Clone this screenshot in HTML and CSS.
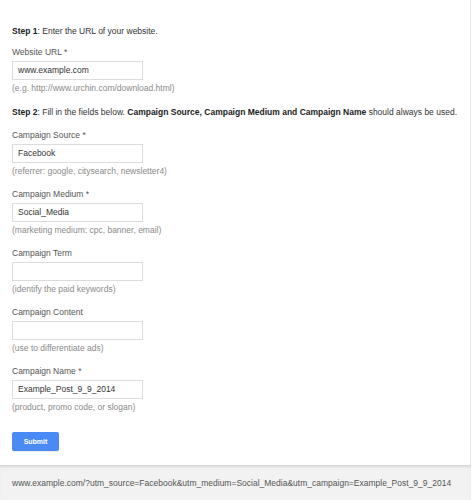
FILE: index.html
```html
<!DOCTYPE html>
<html>
<head>
<meta charset="utf-8">
<link rel="stylesheet" href="styles.css">
</head>
<body>
<div class="page">
  <form class="card">
    <p class="step"><b>Step 1</b>: Enter the URL of your website.</p>
    <div class="field first">
      <label class="label">Website URL *</label>
      <div class="input">www.example.com</div>
      <div class="hint">(e.g. http://www.urchin.com/download.html)</div>
    </div>
    <p class="step step2"><b>Step 2</b>: Fill in the fields below. <b>Campaign Source, Campaign Medium and Campaign Name</b> should always be used.</p>
    <div class="field">
      <label class="label">Campaign Source *</label>
      <div class="input">Facebook</div>
      <div class="hint">(referrer: google, citysearch, newsletter4)</div>
    </div>
    <div class="field">
      <label class="label">Campaign Medium *</label>
      <div class="input">Social_Media</div>
      <div class="hint">(marketing medium: cpc, banner, email)</div>
    </div>
    <div class="field">
      <label class="label">Campaign Term</label>
      <div class="input"></div>
      <div class="hint">(identify the paid keywords)</div>
    </div>
    <div class="field">
      <label class="label">Campaign Content</label>
      <div class="input"></div>
      <div class="hint">(use to differentiate ads)</div>
    </div>
    <div class="field">
      <label class="label">Campaign Name *</label>
      <div class="input">Example_Post_9_9_2014</div>
      <div class="hint">(product, promo code, or slogan)</div>
    </div>
    <div class="actions"><span class="btn">Submit</span></div>
  </form>
  <div class="result">www.example.com/?utm_source=Facebook&amp;utm_medium=Social_Media&amp;utm_campaign=Example_Post_9_9_2014</div>
</div>
</body>
</html>
```
FILE: styles.css
```css
* { box-sizing: border-box; }
html, body { margin: 0; padding: 0; background: #fff; }
body { font-family: "Liberation Sans", Arial, sans-serif; font-size: 8.5px; line-height: 11px; color: #555; }
.page { width: 471px; }
.card {
  display: flex; flex-direction: column;
  padding: 26px 12px 14px;
  border-right: 1px solid #e4e4e4;
  margin: 0;
}
.step { margin: 0; color: #333; }
.step b { color: #222; }
.step2 { margin-top: 13px; }
.field { display: flex; flex-direction: column; margin-top: 12px; }
.field.first { margin-top: 10px; }
.label { display: block; color: #555; }
.input {
  margin-top: 3px; width: 131px; height: 19px;
  border: 1px solid #dcdcdc; background: #fff;
  padding: 0 5px; color: #333; line-height: 17px;
}
.hint { margin-top: 3px; color: #8a8a8a; }
.actions { margin-top: 19px; display: flex; }
.btn {
  width: 47px; height: 19px; border-radius: 2px;
  background: #4a8af4; color: #fff; font-weight: bold; font-size: 7px;
  display: flex; align-items: center; justify-content: center;
  box-shadow: 0 1px 1px rgba(0,0,0,0.08);
}
.result {
  background: #f2f2f2; color: #555;
  border-top: 1px solid #d6d6d6;
  box-shadow: inset 0 2px 2px rgba(0,0,0,0.06);
  height: 35px; padding: 12px 12px 0;
}
```
